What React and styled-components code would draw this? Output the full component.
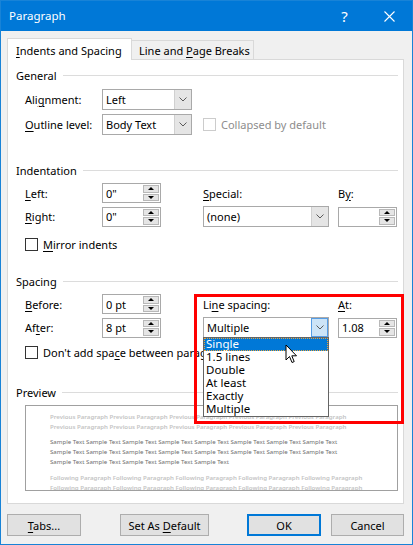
import React from 'react';
import styled, { createGlobalStyle } from 'styled-components';

const Global = createGlobalStyle`
  html, body { margin: 0; padding: 0; background: #ffffff; }
  body {
    font-family: "Noto Sans", "Open Sans", sans-serif;
    font-size: 11px;
    color: #000;
  }
  * { box-sizing: border-box; }
`;

const Window = styled.div`
  position: relative;
  width: 413px;
  height: 545px;
  border: 1px solid #1883d7;
  background: #f0f0f0;
  display: flex;
  flex-direction: column;
  overflow: hidden;
`;

const TitleBar = styled.div`
  height: 30px;
  flex: none;
  background: #0078d7;
  color: #fff;
  display: flex;
  align-items: center;
  padding-left: 8px;
  font-size: 11.5px;
`;

const Title = styled.div`
  flex: 1;
  padding-bottom: 1px;
`;

const TitleButton = styled.div`
  width: 45px;
  height: 30px;
  display: flex;
  align-items: center;
  justify-content: center;
  font-size: 15px;
`;

const Body = styled.div`
  flex: 1;
  display: flex;
  flex-direction: column;
  padding: 7px 8px 0 6px;
`;

const TabRow = styled.div`
  height: 21px;
  display: flex;
  align-items: flex-end;
`;

const Tab = styled.div`
  position: relative;
  width: ${(p) => p.$w}px;
  height: ${(p) => (p.$active ? 22 : 19)}px;
  margin-bottom: ${(p) => (p.$active ? -1 : 0)}px;
  z-index: ${(p) => (p.$active ? 1 : 0)};
  background: ${(p) => (p.$active ? '#fff' : '#f0f0f0')};
  border: 1px solid #d9d9d9;
  border-bottom: none;
  border-left: ${(p) => (p.$active ? '1px solid #d9d9d9' : 'none')};
  padding-left: ${(p) => (p.$active ? 8 : 7)}px;
  padding-top: ${(p) => (p.$active ? 2 : 1)}px;
  display: flex;
  align-items: center;
  white-space: nowrap;
`;

const Key = styled.span`
  text-decoration: underline;
  text-underline-offset: 2px;
`;

const Panel = styled.div`
  height: 445px;
  flex: none;
  background: #fff;
  border: 1px solid #d9d9d9;
  padding: 7px 5px 0 8px;
  display: flex;
  flex-direction: column;
`;

const SectionHeader = styled.div`
  height: 16px;
  margin-top: ${(p) => p.$mt || 0}px;
  display: flex;
  align-items: center;
  gap: 6px;
  white-space: nowrap;
  &::after {
    content: '';
    flex: 1;
    height: 1px;
    background: #dcdcdc;
  }
`;

const FormGrid = styled.div`
  margin-top: ${(p) => p.$mt || 0}px;
  padding-left: 9px;
  display: grid;
  grid-template-columns: 77px 101px 135px 59px;
  grid-auto-rows: ${(p) => p.$rows || '21px'};
  row-gap: ${(p) => p.$gap || 3}px;
  align-items: center;
`;

const Label = styled.div`
  white-space: nowrap;
`;

const SelectBox = styled.div`
  position: relative;
  width: ${(p) => p.$w}px;
  height: 21px;
  border: 1px solid #a9a9a9;
  background: #fff;
  display: flex;
`;

const SelectValue = styled.div`
  flex: 1;
  padding-left: 3px;
  display: flex;
  align-items: center;
  white-space: nowrap;
`;

const SelectArrow = styled.div`
  width: 17px;
  background: ${(p) => (p.$open ? '#cce4f7' : '#e5e5e5')};
  border-left: 1px solid ${(p) => (p.$open ? '#569de5' : '#d0d0d0')};
  outline: ${(p) => (p.$open ? '1px solid #569de5' : 'none')};
  outline-offset: -1px;
  display: flex;
  align-items: center;
  justify-content: center;
`;

const Chevron = () => (
  <svg width="8" height="5" viewBox="0 0 8 5">
    <polyline points="0.5,0.5 4,4 7.5,0.5" fill="none" stroke="#5a5a5a" strokeWidth="1" />
  </svg>
);

const Select = ({ w, value, open, children }) => (
  <SelectBox $w={w}>
    <SelectValue>{value}</SelectValue>
    <SelectArrow $open={open}>
      <Chevron />
    </SelectArrow>
    {children}
  </SelectBox>
);

const SpinBox = styled.div`
  width: 59px;
  height: 20px;
  border: 1px solid #a9a9a9;
  background: #fff;
  display: flex;
`;

const SpinValue = styled.div`
  flex: 1;
  padding-left: 3px;
  display: flex;
  align-items: center;
`;

const SpinButtons = styled.div`
  width: 17px;
  padding: 1px 1px 1px 0;
  display: flex;
  flex-direction: column;
  gap: 1px;
`;

const SpinHalf = styled.div`
  flex: 1;
  background: #e5e5e5;
  border: 1px solid #b8b8b8;
  display: flex;
  align-items: center;
  justify-content: center;
`;

const Tri = styled.span`
  width: 0;
  height: 0;
  border-left: 3px solid transparent;
  border-right: 3px solid transparent;
  ${(p) => (p.$up ? 'border-bottom: 3px solid #000;' : 'border-top: 3px solid #000;')}
`;

const Spin = ({ value }) => (
  <SpinBox>
    <SpinValue>{value}</SpinValue>
    <SpinButtons>
      <SpinHalf>
        <Tri $up />
      </SpinHalf>
      <SpinHalf>
        <Tri />
      </SpinHalf>
    </SpinButtons>
  </SpinBox>
);

const CheckRow = styled.div`
  margin-top: ${(p) => p.$mt || 0}px;
  padding-left: ${(p) => p.$pl || 0}px;
  height: 13px;
  display: flex;
  align-items: center;
  gap: 5px;
  white-space: nowrap;
  color: ${(p) => (p.$disabled ? '#8d8d8d' : '#000')};
`;

const Box = styled.span`
  flex: none;
  width: 13px;
  height: 13px;
  border: 1px solid ${(p) => (p.$disabled ? '#cccccc' : '#333333')};
  background: #fff;
`;

const CheckText = styled.span`
  max-width: ${(p) => p.$max || 400}px;
  overflow: hidden;
`;

const Anchor = styled.div`
  position: relative;
`;

const List = styled.div`
  position: absolute;
  left: -1px;
  top: 19px;
  width: 126px;
  border: 1px solid #646464;
  background: #fff;
  z-index: 5;
`;

const Item = styled.div`
  height: 13px;
  line-height: 12px;
  padding-left: 2px;
  font-size: 11.5px;
  white-space: nowrap;
  background: ${(p) => (p.$sel ? '#0078d7' : '#fff')};
  color: ${(p) => (p.$sel ? '#fff' : '#000')};
  outline: ${(p) => (p.$sel ? '1px dotted #e8a33c' : 'none')};
  outline-offset: -1px;
`;

const PreviewBox = styled.div`
  margin: 5px 0 0 9px;
  height: 86px;
  border: 1px solid #a0a0a0;
  padding: 6px 10px 0 24px;
  overflow: hidden;
  font-size: 6.1px;
  line-height: 10px;
  white-space: nowrap;
`;

const PreviewPara = styled.div`
  color: ${(p) => (p.$faint ? '#c4c4c4' : '#6e6e6e')};
  margin-top: ${(p) => p.$mt || 0}px;
  font-weight: ${(p) => (p.$faint ? 600 : 400)};
`;

const ButtonRow = styled.div`
  margin-top: 10px;
  display: flex;
  gap: 10px;
`;

const Button = styled.div`
  width: ${(p) => p.$w}px;
  height: 22px;
  margin-left: ${(p) => p.$ml || 0}px;
  background: #e1e1e1;
  border: ${(p) => (p.$primary ? '2px solid #0078d7' : '1px solid #adadad')};
  display: flex;
  align-items: center;
  justify-content: center;
  white-space: nowrap;
`;

const Annotation = styled.div`
  position: absolute;
  left: 193px;
  top: 293px;
  width: 210px;
  height: 130px;
  border: 3px solid #ff0000;
  pointer-events: none;
  z-index: 8;
`;

const Cursor = styled.svg`
  position: absolute;
  left: 284px;
  top: 343px;
  z-index: 9;
`;

const repeat = (s, n) => Array(n).fill(s).join(' ');

export default function App() {
  const prev = repeat('Previous Paragraph', 5);
  const sample = repeat('Sample Text', 8);
  const follow = repeat('Following Paragraph', 5);
  return (
    <>
      <Global />
      <Window>
        <TitleBar>
          <Title>Paragraph</Title>
          <TitleButton>?</TitleButton>
          <TitleButton>
            <svg width="11" height="11" viewBox="0 0 11 11">
              <path d="M0.5 0.5 L10.5 10.5 M10.5 0.5 L0.5 10.5" stroke="#fff" strokeWidth="1.1" />
            </svg>
          </TitleButton>
        </TitleBar>
        <Body>
          <TabRow>
            <Tab $active $w={125}>
              <span><Key>I</Key>ndents and Spacing</span>
            </Tab>
            <Tab $w={122}>
              <span>Line and <Key>P</Key>age Breaks</span>
            </Tab>
          </TabRow>
          <Panel>
            <SectionHeader>General</SectionHeader>
            <FormGrid $mt={6} $gap={4}>
              <Label>Ali<Key>g</Key>nment:</Label>
              <Select w={90} value="Left" />
              <span />
              <span />
              <Label><Key>O</Key>utline level:</Label>
              <Select w={90} value="Body Text" />
              <CheckRow $disabled>
                <Box $disabled />
                <span>Collapsed by default</span>
              </CheckRow>
              <span />
            </FormGrid>

            <SectionHeader $mt={27}>Indentation</SectionHeader>
            <FormGrid $mt={5} $rows="20px 21px">
              <Label><Key>L</Key>eft:</Label>
              <Spin value={'0"'} />
              <Label><Key>S</Key>pecial:</Label>
              <Label>B<Key>y</Key>:</Label>
              <Label><Key>R</Key>ight:</Label>
              <Spin value={'0"'} />
              <Select w={126} value="(none)" />
              <Spin value="" />
            </FormGrid>
            <CheckRow $mt={11} $pl={9}>
              <Box />
              <span><Key>M</Key>irror indents</span>
            </CheckRow>

            <SectionHeader $mt={22}>Spacing</SectionHeader>
            <FormGrid $mt={5} $rows="20px 21px">
              <Label><Key>B</Key>efore:</Label>
              <Spin value="0 pt" />
              <Label>Li<Key>n</Key>e spacing:</Label>
              <Label><Key>A</Key>t:</Label>
              <Label>Af<Key>t</Key>er:</Label>
              <Spin value="8 pt" />
              <Anchor>
                <Select w={126} value="Multiple" open>
                  <List>
                    <Item $sel>Single</Item>
                    <Item>1.5 lines</Item>
                    <Item>Double</Item>
                    <Item>At least</Item>
                    <Item>Exactly</Item>
                    <Item>Multiple</Item>
                  </List>
                </Select>
              </Anchor>
              <Spin value="1.08" />
            </FormGrid>
            <CheckRow $mt={8} $pl={9}>
              <Box />
              <CheckText $max={160}>
                Don't add spa<Key>c</Key>e between paragraphs of the same style
              </CheckText>
            </CheckRow>

            <SectionHeader $mt={25}>Preview</SectionHeader>
            <PreviewBox>
              <PreviewPara $faint>{prev}<br />{prev}</PreviewPara>
              <PreviewPara $mt={5}>{sample}<br />{sample}<br />{repeat('Sample Text', 5)}</PreviewPara>
              <PreviewPara $faint $mt={6}>{follow}<br />{follow}</PreviewPara>
            </PreviewBox>
          </Panel>
          <ButtonRow>
            <Button $w={74}><span><Key>T</Key>abs...</span></Button>
            <Button $w={89} $ml={29}><span>Set As <Key>D</Key>efault</span></Button>
            <Button $w={74} $primary $ml={28}>OK</Button>
            <Button $w={73}>Cancel</Button>
          </ButtonRow>
        </Body>
        <Annotation />
        <Cursor width="13" height="21" viewBox="0 0 13 21">
          <path d="M1 1 L1 16 L4.5 12.5 L7 18.5 L9.2 17.6 L6.8 11.8 L11.5 11.8 Z" fill="#fff" stroke="#000" strokeWidth="1" strokeLinejoin="miter" />
        </Cursor>
      </Window>
    </>
  );
}
